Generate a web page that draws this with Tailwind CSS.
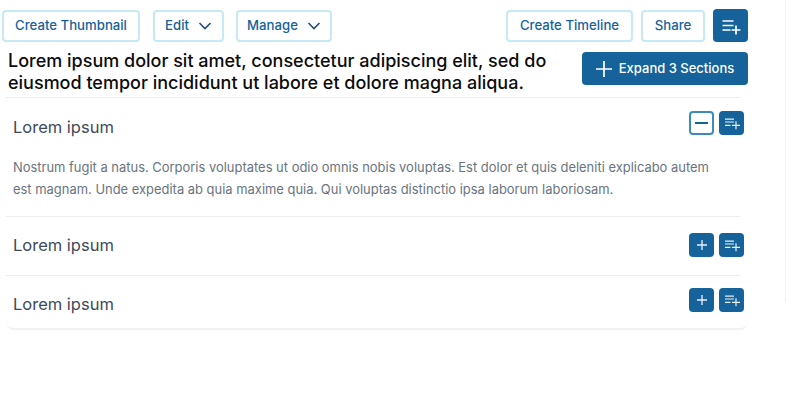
<!DOCTYPE html>
<html><head><meta charset="utf-8"><script src="https://cdn.jsdelivr.net/npm/@tailwindcss/browser@4"></script></head>
<body class="bg-white overflow-hidden">
<div class="flex w-[804px] h-[417px] items-start font-['Inter',sans-serif]">
<div class="w-[748px]">
  <div class="flex items-center h-[33px] mt-[9px] pl-[2px]">
    <button class="h-[32px] w-[138px] border-2 border-[#c5eaf5] rounded-[4px] text-[13.200px] font-medium text-[#15639a]">Create Thumbnail</button>
    <button class="h-[32px] w-[71px] ml-[13px] border-2 border-[#c5eaf5] rounded-[4px] text-[13.200px] font-medium text-[#15639a] flex items-center justify-center gap-[9px]">Edit
      <svg class="w-[14px] h-[8px]" viewBox="0 0 14 8" fill="none" stroke="#1f4e79" stroke-width="1.6"><path d="M1.5 1 7 6.5 12.5 1"/></svg></button>
    <button class="h-[32px] w-[96px] ml-[12px] border-2 border-[#c5eaf5] rounded-[4px] text-[13.200px] font-medium text-[#15639a] flex items-center justify-center gap-[9px]">Manage
      <svg class="w-[14px] h-[8px]" viewBox="0 0 14 8" fill="none" stroke="#1f4e79" stroke-width="1.6"><path d="M1.5 1 7 6.5 12.5 1"/></svg></button>
    <button class="h-[32px] w-[127px] ml-auto border-2 border-[#c5eaf5] rounded-[4px] text-[13.200px] font-medium text-[#15639a]">Create Timeline</button>
    <button class="h-[32px] w-[64px] ml-[8px] border-2 border-[#c5eaf5] rounded-[4px] text-[13.200px] font-medium text-[#15639a]">Share</button>
    <button class="h-[33px] w-[35px] ml-[8px] bg-[#15639a] rounded-[4px] flex items-center justify-center">
      <svg class="w-[20px] h-[18px]" viewBox="0 0 20 18" fill="none" stroke="#fff" stroke-width="1.7"><path d="M1.500 4h11M1.500 8.500h11M1.500 13h8M10.500 13h9M15 8.500v9"/></svg></button>
  </div>
  <div class="flex items-start mt-[10px]">
    <h1 class="w-[570px] -mt-[2px] pl-[8px] text-[18px] leading-[22px] font-medium text-[#0c0c0c]">Lorem ipsum dolor sit amet, consectetur adipiscing elit, sed do eiusmod tempor incididunt ut labore et dolore magna aliqua.</h1>
    <button class="ml-auto h-[33px] w-[166px] bg-[#15639a] rounded-[4px] text-white text-[13px] font-medium flex items-center justify-center gap-[7px]">
      <svg class="w-[16px] h-[16px]" viewBox="0 0 16 16" stroke="#fff" stroke-width="1.7"><path d="M0 8h16M8 0v16"/></svg>Expand 3 Sections</button>
  </div>
  <div class="mt-[3px] ml-[6px] mr-[8px] border-t border-[#eceeef]"></div>
  <section class="ml-[6px] mr-[8px] border-b border-[#eceeef] h-[119px] pl-[7px] pt-[13px]">
    <div class="flex items-start">
      <h2 class="mt-[4px] text-[16.500px] leading-[24px] text-[#3f4a58] font-normal">Lorem ipsum</h2>
      <button class="ml-auto w-[25px] h-[24px] border-2 border-[#3d8abd] rounded-[4px] flex items-center justify-center">
        <svg class="w-[13px] h-[2px]" viewBox="0 0 13 2"><path d="M0 1h13" stroke="#15639a" stroke-width="2"/></svg></button>
      <button class="ml-[5px] mr-[-4px] w-[25px] h-[24px] bg-[#15639a] rounded-[4px] flex items-center justify-center">
        <svg class="w-[16px] h-[13px]" viewBox="0 0 16 13" fill="none" stroke="#e8f1f7" stroke-width="1.200"><path d="M1 2.200h9M1 5h9M1 8.300h5.500M8 8.300h8M12 4.300v8"/></svg></button>
    </div>
    <p class="mt-[17px] text-[12.950px] leading-[22px] text-[#6a7480] whitespace-nowrap">Nostrum fugit a natus. Corporis voluptates ut odio omnis nobis voluptas. Est dolor et quis deleniti explicabo autem<br>est magnam. Unde expedita ab quia maxime quia. Qui voluptas distinctio ipsa laborum laboriosam.</p>
  </section>
  <section class="ml-[6px] mr-[8px] border-b border-[#eceeef] h-[59px] pl-[7px] pt-[16px] flex items-start">
      <h2 class="text-[16.500px] leading-[24px] text-[#3f4a58] font-normal">Lorem ipsum</h2>
      <button class="ml-auto w-[25px] h-[24px] bg-[#15639a] rounded-[4px] flex items-center justify-center">
        <svg class="w-[10px] h-[10px]" viewBox="0 0 10 10" stroke="#e8f1f7" stroke-width="1.3"><path d="M0 5h10M5 0v10"/></svg></button>
      <button class="ml-[5px] mr-[-4px] w-[25px] h-[24px] bg-[#15639a] rounded-[4px] flex items-center justify-center">
        <svg class="w-[16px] h-[13px]" viewBox="0 0 16 13" fill="none" stroke="#e8f1f7" stroke-width="1.200"><path d="M1 2.200h9M1 5h9M1 8.300h5.500M8 8.300h8M12 4.300v8"/></svg></button>
  </section>
  <section class="ml-[6px] border-b-2 border-[#f1f2f3] rounded-b-[8px] h-[54px] pl-[7px] pr-[4px] pt-[12px] flex items-start">
      <h2 class="mt-[4px] text-[16.500px] leading-[24px] text-[#3f4a58] font-normal">Lorem ipsum</h2>
      <button class="ml-auto w-[25px] h-[24px] bg-[#15639a] rounded-[4px] flex items-center justify-center">
        <svg class="w-[10px] h-[10px]" viewBox="0 0 10 10" stroke="#e8f1f7" stroke-width="1.3"><path d="M0 5h10M5 0v10"/></svg></button>
      <button class="ml-[5px] w-[25px] h-[24px] bg-[#15639a] rounded-[4px] flex items-center justify-center">
        <svg class="w-[16px] h-[13px]" viewBox="0 0 16 13" fill="none" stroke="#e8f1f7" stroke-width="1.200"><path d="M1 2.200h9M1 5h9M1 8.300h5.500M8 8.300h8M12 4.300v8"/></svg></button>
  </section>
</div>
<div class="ml-[37px] w-0 h-[303px] border-l border-[#f0f0f0]"></div>
</div>
</body></html>
